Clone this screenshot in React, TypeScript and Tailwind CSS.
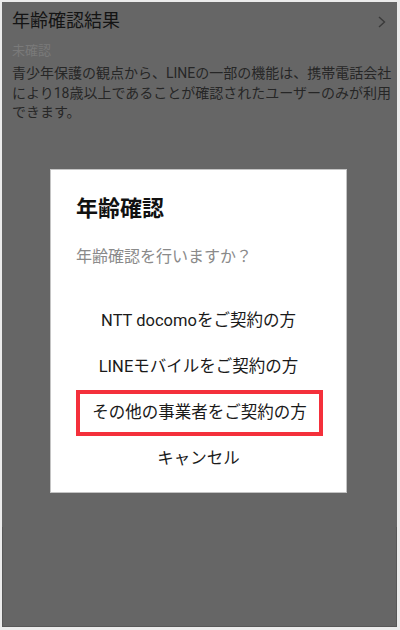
import React from 'react';

const font = { fontFamily: 'Roboto, "Noto Sans CJK JP", sans-serif' };

const options = [
    { label: 'NTT docomoをご契約の方', marked: false },
    { label: 'LINEモバイルをご契約の方', marked: false },
    { label: 'その他の事業者をご契約の方', marked: true },
    { label: 'キャンセル', marked: false },
];

const AgeCheckDialog: React.FC = () => (
    <div className="absolute left-[48px] top-[167px] w-[297px] h-[324px] bg-white border border-[#c4c4c4] flex flex-col">
        {/* Title */}
        <div className="pt-[26px] pl-[25px] text-[22px] leading-[26px] font-bold text-[#111]">年齢確認</div>
        <div className="mt-[23px] pl-[25px] text-[16px] leading-[24px] text-[#8a8a8a]">年齢確認を行いますか？</div>

        {/* Options */}
        <div className="mt-[29px] flex flex-col">
            {options.map((o) =>
                o.marked ? (
                    <div
                        key={o.label}
                        className="ml-[25px] mr-[23px] h-[46px] border-[4px] border-[#f4303b] flex items-center justify-center text-[16.5px] text-[#1a1a1a]"
                    >
                        {o.label}
                    </div>
                ) : (
                    <div key={o.label} className="h-[46px] flex items-center justify-center text-[16.5px] text-[#1a1a1a]">
                        {o.label}
                    </div>
                )
            )}
        </div>
    </div>
);

export default function App() {
    return (
        <div className="w-[400px] h-[630px] bg-[#ececec] pt-[2px] pl-[2px] pr-[3px] pb-[3px]" style={font}>
            <div className="relative h-full bg-[#666666] flex flex-col overflow-hidden">
                {/* Header row */}
                <div className="pt-[3px] h-[35px] pl-[10px] pr-[11px] flex items-center justify-between">
                    <span className="text-[18px] leading-[32px] text-[#141414]">年齢確認結果</span>
                    <svg width="8" height="12" viewBox="0 0 8 12" fill="none" className="mt-[1px]">
                        <path d="M1 1l5.5 5L1 11" stroke="#3a3a3a" strokeWidth="1.4" />
                    </svg>
                </div>

                <div className="mt-[4px] pl-[10px] h-[20px] text-[13px] leading-[20px] text-[#7a7a7a]">未確認</div>
                <p className="mt-[3px] pl-[10px] text-[14px] leading-[19.5px] text-[#262626]">
                    青少年保護の観点から、LINEの一部の機能は、携帯電話会社
                    <br />
                    により18歳以上であることが確認されたユーザーのみが利用
                    <br />
                    できます。
                </p>

                {/* Bottom panel */}
                <div className="mt-auto h-[100px] border-l border-r border-b border-[#585858]" />

                <AgeCheckDialog />
            </div>
        </div>
    );
}
